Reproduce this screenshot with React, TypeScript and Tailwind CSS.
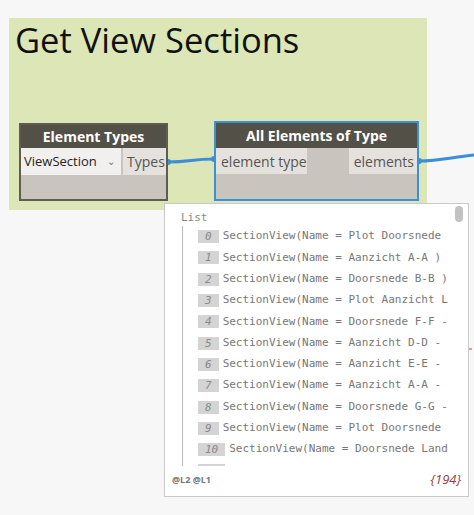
import React from 'react'

const rows = [
  'SectionView(Name = Plot Doorsnede',
  'SectionView(Name = Aanzicht A-A )',
  'SectionView(Name = Doorsnede B-B )',
  'SectionView(Name = Plot Aanzicht L',
  'SectionView(Name = Doorsnede F-F -',
  'SectionView(Name = Aanzicht D-D -',
  'SectionView(Name = Aanzicht E-E -',
  'SectionView(Name = Aanzicht A-A -',
  'SectionView(Name = Doorsnede G-G -',
  'SectionView(Name = Plot Doorsnede',
  'SectionView(Name = Doorsnede Land',
]

const ui = { fontFamily: '"Open Sans", "Noto Sans", sans-serif' }
const mono = { fontFamily: '"DejaVu Sans Mono", "Liberation Mono", monospace' }

function Wires() {
  return (
    <svg className="absolute inset-0 pointer-events-none" width="474" height="515">
      <path d="M168 162 C190 162, 192 159, 214 159" stroke="#3b8ed8" strokeWidth="3" fill="none" />
      <circle cx="168" cy="162" r="3" fill="#3b8ed8" />
      <circle cx="214" cy="159" r="3" fill="#3b8ed8" />
      <path d="M419 161 C440 161, 452 157, 474 155" stroke="#3b8ed8" strokeWidth="3" fill="none" />
      <circle cx="419" cy="161" r="3" fill="#3b8ed8" />
      <line x1="466" y1="349" x2="472" y2="349" stroke="#d04040" strokeWidth="1" />
    </svg>
  )
}

export default function App() {
  return (
    <div className="relative w-[474px] h-[515px] overflow-hidden bg-[#f7f7f7]" style={ui}>
      {/* group */}
      <div className="absolute left-[9px] top-[18px] w-[418px] h-[192px] bg-[#dce6b6]">
        <div className="pl-[6px] pt-[1px] text-[34.5px] leading-[42px] text-[#111]">Get View Sections</div>
      </div>

      <Wires />

      {/* Element Types node */}
      <div className="absolute left-[19px] top-[123px] w-[149px] h-[78px] border-2 border-[#5f5d52] bg-[#c9c5be] flex flex-col">
        <div className="h-[23px] bg-[#535048] text-white font-bold text-[14px] flex items-center justify-center">
          Element Types
        </div>
        <div className="h-[27px] flex items-stretch">
          <div className="w-[100px] bg-[#f1f0ee] flex items-center justify-between pl-[3px] pr-[6px] text-[13px] text-[#222]">
            <span>ViewSection</span>
            <span className="text-[10px] text-[#777]">⌄</span>
          </div>
          <div className="ml-[2px] flex-1 bg-[#e5e2dd] flex items-center pl-[4px] text-[14px] text-[#555]">Types</div>
        </div>
      </div>

      {/* All Elements of Type node */}
      <div className="absolute left-[214px] top-[121px] w-[205px] h-[80px] border-2 border-[#3d8fd6] bg-[#c9c5be] flex flex-col">
        <div className="h-[25px] bg-[#535048] text-white font-bold text-[14px] flex items-center justify-center">
          All Elements of Type
        </div>
        <div className="h-[26px] flex items-stretch justify-between">
          <div className="w-[91px] bg-[#e5e2dd] flex items-center pl-[5px] text-[14px] text-[#555]">element type</div>
          <div className="w-[68px] bg-[#e5e2dd] flex items-center justify-end pr-[3px] text-[14px] text-[#555]">elements</div>
        </div>
      </div>

      {/* preview popup */}
      <div className="absolute left-[164px] top-[203px] w-[305px] h-[294px] bg-white border border-[#c9c9c9] flex flex-col">
        <div className="relative h-[262px] overflow-hidden">
          <div className="absolute right-[5px] top-[2px] w-[8px] h-[16px] rounded-[4px] bg-[#c2c2c2]" />
          <div className="pl-[16px] pt-[7px] text-[11px] leading-[13px] text-[#888]" style={mono}>List</div>
          <div className="ml-[17px] mt-[2px] h-[250px] border-l border-[#bbb] pl-[15px] flex flex-col">
            {rows.map((r, i) => (
              <div key={i} className="h-[21.3px] shrink-0 flex items-center whitespace-nowrap text-[11px] text-[#777]" style={mono}>
                <span className="min-w-[20px] h-[13px] px-[7px] bg-[#d4d4d4] text-[#8a8a8a] italic text-right leading-[13px]">{i}</span>
                <span className="ml-[4px]">{r}</span>
              </div>
            ))}
            <div className="mt-[4px] w-[27px] h-[2px] shrink-0 bg-[#d4d4d4]" />
          </div>
        </div>
        <div className="flex-1 flex items-center justify-between px-[7px] pb-[3px]">
          <span className="text-[9px] font-bold text-[#777]">@L2 @L1</span>
          <span className="text-[13px] italic text-[#9b3d3d]">{'{194}'}</span>
        </div>
      </div>
    </div>
  )
}
